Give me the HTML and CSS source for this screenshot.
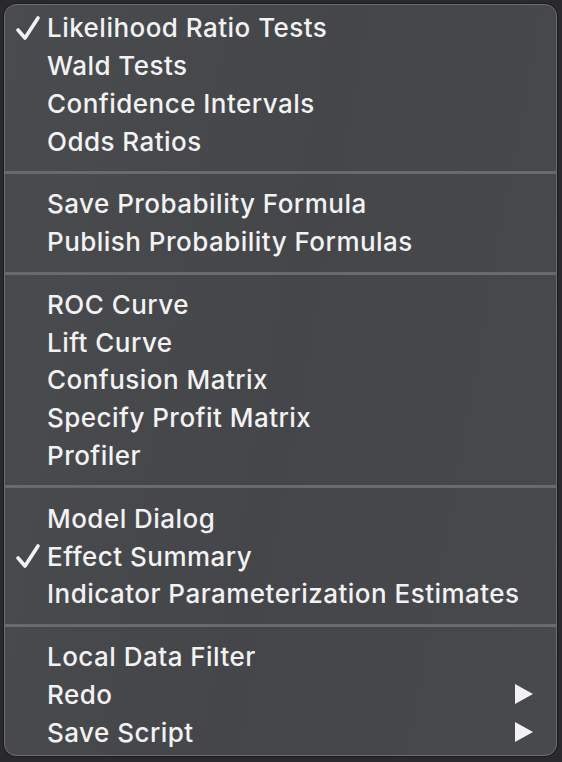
FILE: index.html
```html
<!DOCTYPE html>
<html>
<head>
<meta charset="utf-8">
<link rel="stylesheet" href="styles.css">
</head>
<body>
<div class="backdrop">
  <div class="menu">
    <div class="item"><span class="check"><svg width="26" height="26" viewBox="0 0 26 26"><path d="M3 15 L10 23 L23 3" fill="none" stroke="#f2f2f2" stroke-width="3.6" stroke-linecap="round" stroke-linejoin="round"/></svg></span><span class="label">Likelihood Ratio Tests</span></div>
    <div class="item"><span class="check"></span><span class="label">Wald Tests</span></div>
    <div class="item"><span class="check"></span><span class="label">Confidence Intervals</span></div>
    <div class="item"><span class="check"></span><span class="label">Odds Ratios</span></div>
    <div class="sep"></div>
    <div class="item"><span class="check"></span><span class="label">Save Probability Formula</span></div>
    <div class="item"><span class="check"></span><span class="label">Publish Probability Formulas</span></div>
    <div class="sep"></div>
    <div class="item"><span class="check"></span><span class="label">ROC Curve</span></div>
    <div class="item"><span class="check"></span><span class="label">Lift Curve</span></div>
    <div class="item"><span class="check"></span><span class="label">Confusion Matrix</span></div>
    <div class="item"><span class="check"></span><span class="label">Specify Profit Matrix</span></div>
    <div class="item"><span class="check"></span><span class="label">Profiler</span></div>
    <div class="sep"></div>
    <div class="item"><span class="check"></span><span class="label">Model Dialog</span></div>
    <div class="item"><span class="check"><svg width="26" height="26" viewBox="0 0 26 26"><path d="M3 15 L10 23 L23 3" fill="none" stroke="#f2f2f2" stroke-width="3.6" stroke-linecap="round" stroke-linejoin="round"/></svg></span><span class="label">Effect Summary</span></div>
    <div class="item"><span class="check"></span><span class="label">Indicator Parameterization Estimates</span></div>
    <div class="sep"></div>
    <div class="item"><span class="check"></span><span class="label">Local Data Filter</span></div>
    <div class="item"><span class="check"></span><span class="label">Redo</span><svg class="arrow" width="18" height="20" viewBox="0 0 18 20"><polygon points="0,0 18,10 0,20" fill="#f2f2f2"/></svg></div>
    <div class="item"><span class="check"></span><span class="label">Save Script</span><svg class="arrow" width="18" height="20" viewBox="0 0 18 20"><polygon points="0,0 18,10 0,20" fill="#f2f2f2"/></svg></div>
  </div>
</div>
</body>
</html>
```
FILE: styles.css
```css
html, body {
  margin: 0;
  padding: 0;
  background: #2a2a2c;
}
.backdrop {
  width: 562px;
  height: 762px;
  padding: 4px 5px 6px 4px;
  box-sizing: border-box;
}
.menu {
  height: 100%;
  box-sizing: border-box;
  border: 1px solid #6c6d70;
  box-shadow: 0 0 0 1px #1c1c1e;
  border-radius: 12px;
  background: linear-gradient(100deg, #4a4b4e 0%, #45464a 50%, #48494c 100%);
  padding: 4px 0 4px 0;
  display: flex;
  flex-direction: column;
  font-family: Inter, "Noto Sans", sans-serif;
  font-size: 26px;
  font-weight: 500;
  color: #f2f2f2;
}
.item {
  height: 38px;
  display: flex;
  align-items: center;
  padding: 0 23px 0 10px;
}
.check {
  width: 32px;
  height: 26px;
  flex: none;
  display: flex;
  align-items: center;
}
.label {
  flex: 1;
  letter-spacing: 0.47px;
}
.arrow {
  flex: none;
}
.sep {
  height: 3px;
  background: #696a6d;
  margin: 11px 0 11px 0;
}
```
